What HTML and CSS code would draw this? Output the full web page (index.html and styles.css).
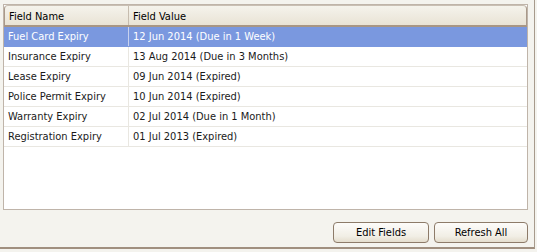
FILE: index.html
```html
<!DOCTYPE html>
<html>
<head>
<meta charset="utf-8">
<link rel="stylesheet" href="styles.css">
</head>
<body>
<div class="window">
  <div class="grid">
    <div class="header">
      <div class="hcell c1">Field Name</div>
      <div class="hcell c2">Field Value</div>
    </div>
    <div class="row selected"><div class="cell c1">Fuel Card Expiry</div><div class="cell c2">12 Jun 2014 (Due in 1 Week)</div></div>
    <div class="row"><div class="cell c1">Insurance Expiry</div><div class="cell c2">13 Aug 2014 (Due in 3 Months)</div></div>
    <div class="row"><div class="cell c1">Lease Expiry</div><div class="cell c2">09 Jun 2014 (Expired)</div></div>
    <div class="row"><div class="cell c1">Police Permit Expiry</div><div class="cell c2">10 Jun 2014 (Expired)</div></div>
    <div class="row"><div class="cell c1">Warranty Expiry</div><div class="cell c2">02 Jul 2014 (Due in 1 Month)</div></div>
    <div class="row"><div class="cell c1">Registration Expiry</div><div class="cell c2">01 Jul 2013 (Expired)</div></div>
  </div>
  <div class="buttons">
    <button class="btn btn-edit">Edit Fields</button>
    <button class="btn btn-refresh">Refresh All</button>
  </div>
</div>
</body>
</html>
```
FILE: styles.css
```css
html, body {
  margin: 0;
  padding: 0;
  background: #f4f3ee;
}
body {
  font-family: "DejaVu Sans Condensed", "DejaVu Sans", sans-serif;
  font-size: 11px;
  color: #000;
}
.window {
  box-sizing: border-box;
  width: 535px;
  height: 249px;
  border-right: 1px solid #a79a8c;
  border-bottom: 2px solid #a08f7f;
  padding: 4px 0 0 3px;
  display: flex;
  flex-direction: column;
}
.grid {
  box-sizing: border-box;
  width: 525px;
  height: 206px;
  background: #fff;
  border: 1px solid #bfb4a9;
  display: flex;
  flex-direction: column;
}
.header {
  display: flex;
  height: 22px;
  flex: none;
  box-sizing: border-box;
  background: linear-gradient(#f5f3ec, #e9e3d5);
  border: 1px solid #a9998a;
  border-top-color: #c9bfb3;
  border-radius: 4px 4px 0 0;
  border-bottom: 2px solid #a89684;
}
.hcell {
  display: flex;
  align-items: center;
  padding-left: 4px;
  padding-top: 1px;
  box-sizing: border-box;
}
.header .c1 {
  width: 124px;
  border-right: 1px solid #c6bcae;
}
.row {
  display: flex;
  flex: none;
  height: 20px;
  box-sizing: border-box;
  border-bottom: 1px solid #e9e7e1;
}
.cell {
  display: flex;
  align-items: center;
  padding-left: 4px;
  box-sizing: border-box;
  color: #1a1a1a;
}
.row .c1 {
  width: 125px;
  border-right: 1px solid #e9e7e1;
}
.row.selected {
  background: #7a98df;
  border-bottom-color: #7a98df;
}
.row.selected .cell {
  color: #fff;
  border-right-color: #c8d2ef;
}
.buttons {
  display: flex;
  justify-content: flex-end;
  gap: 5px;
  margin-top: 12px;
  padding-right: 6px;
}
.btn {
  box-sizing: border-box;
  height: 21px;
  font-family: "DejaVu Sans Condensed", "DejaVu Sans", sans-serif;
  font-size: 11px;
  color: #000;
  background: linear-gradient(#fdfcfa, #f1eee5 70%, #e4ddcd);
  border: 1px solid #8d7b69;
  border-radius: 4px;
  padding: 0;
}
.btn-edit { width: 96px; }
.btn-refresh { width: 94px; }
```
